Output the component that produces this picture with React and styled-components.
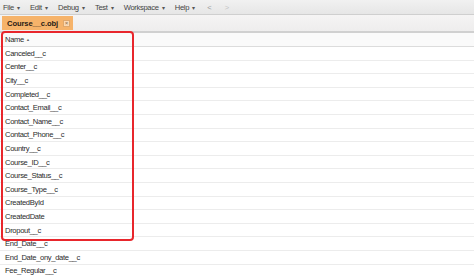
import React from 'react';
import styled, { createGlobalStyle } from 'styled-components';

const fields = [
  'Canceled__c',
  'Center__c',
  'City__c',
  'Completed__c',
  'Contact_Email__c',
  'Contact_Name__c',
  'Contact_Phone__c',
  'Country__c',
  'Course_ID__c',
  'Course_Status__c',
  'Course_Type__c',
  'CreatedById',
  'CreatedDate',
  'Dropout__c',
  'End_Date__c',
  'End_Date_ony_date__c',
  'Fee_Regular__c',
];

const menus = ['File', 'Edit', 'Debug', 'Test', 'Workspace', 'Help'];

export default function App() {
  return (
    <>
      <GlobalStyle />
      <Page>
        <MenuBar>
          {menus.map((m) => (
            <MenuItem key={m}>
              {m}
              <Caret>▾</Caret>
            </MenuItem>
          ))}
          <NavArrow>&lt;</NavArrow>
          <NavArrow $dim>&gt;</NavArrow>
        </MenuBar>

        <TabBar>
          <Tab>
            Course__c.obj
            <CloseBox>×</CloseBox>
          </Tab>
        </TabBar>

        <Grid>
          <HeaderRow>
            Name <SortIcon>▲</SortIcon>
          </HeaderRow>
          {fields.map((f) => (
            <Row key={f}>{f}</Row>
          ))}
          <Highlight />
        </Grid>
      </Page>
    </>
  );
}

const GlobalStyle = createGlobalStyle`
  html, body {
    margin: 0;
    padding: 0;
    background: #fff;
    overflow: hidden;
  }
  body {
    font-family: "Liberation Sans", Arial, sans-serif;
    font-size: 7.6px;
    letter-spacing: -0.33px;
    color: #2b2b2b;
  }
`;

const Page = styled.div`
  width: 474px;
  height: 275px;
  display: flex;
  flex-direction: column;
  overflow: hidden;
`;

const MenuBar = styled.div`
  flex-shrink: 0;
  height: 14px;
  display: flex;
  align-items: center;
  gap: 10.5px;
  padding-left: 3px;
  background: linear-gradient(#f1f1f1, #e6e6e6);
  border-bottom: 1px solid #cfcfcf;
  color: #444;
`;

const MenuItem = styled.span`
  display: flex;
  align-items: center;
  gap: 3px;
`;

const Caret = styled.span`
  font-size: 6px;
  color: #555;
`;

const NavArrow = styled.span`
  color: ${(p) => (p.$dim ? '#c4c4c4' : '#999')};
  margin-left: 2px;
  margin-right: 1px;
`;

const TabBar = styled.div`
  flex-shrink: 0;
  height: 16px;
  display: flex;
  align-items: center;
  padding-left: 2px;
  background: linear-gradient(#f5f4f4, #eeeded);
  border-bottom: 2px solid #d0d0d0;
`;

const Tab = styled.div`
  height: 14px;
  display: flex;
  align-items: center;
  gap: 5px;
  padding: 0 3px 0 5px;
  background: #f6b36a;
  font-weight: bold;
  letter-spacing: -0.1px;
  color: #2a2015;
`;

const CloseBox = styled.span`
  width: 5px;
  height: 5px;
  display: flex;
  align-items: center;
  justify-content: center;
  font-size: 6px;
  font-weight: normal;
  color: #8a6a4a;
  background: #fbd9b3;
  border: 1px solid #e0a86c;
`;

const Grid = styled.div`
  flex-shrink: 0;
  position: relative;
  display: flex;
  flex-direction: column;
`;

const HeaderRow = styled.div`
  flex-shrink: 0;
  height: 13px;
  display: flex;
  align-items: center;
  gap: 2px;
  padding-left: 5px;
  background: #fafafa;
  border-bottom: 1px solid #dcdcdc;
`;

const SortIcon = styled.span`
  font-size: 4px;
  color: #666;
`;

const Row = styled.div`
  flex-shrink: 0;
  height: 12.6px;
  display: flex;
  align-items: center;
  padding-left: 5px;
  border-bottom: 1px solid #ececec;
`;

const Highlight = styled.div`
  position: absolute;
  left: 1px;
  top: -2px;
  width: 129px;
  height: 206px;
  border: 2px solid #e8262c;
  border-radius: 4px;
  pointer-events: none;
`;
